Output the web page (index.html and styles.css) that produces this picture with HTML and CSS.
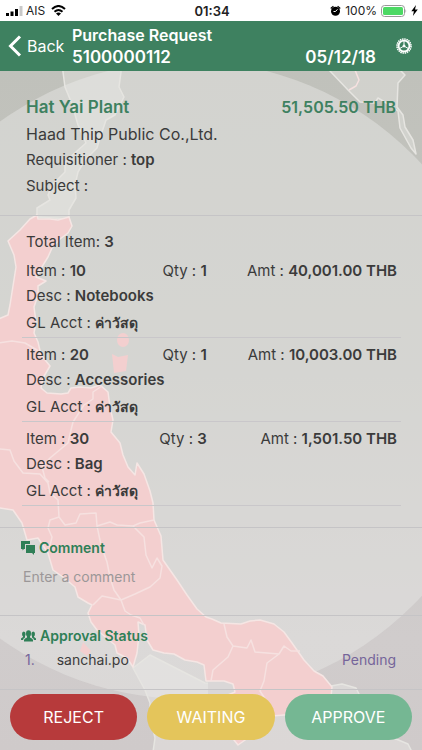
FILE: index.html
```html
<!DOCTYPE html>
<html lang="en">
<head>
<meta charset="utf-8">
<meta name="viewport" content="width=device-width, initial-scale=1">
<title>Purchase Request</title>
<link rel="stylesheet" href="styles.css">
</head>
<body>
<svg class="map" viewBox="0 0 422 750" preserveAspectRatio="xMidYMin slice" aria-hidden="true">
  <circle class="globe" cx="187" cy="380" r="319"/>
  <path class="land" d="M62 60L63 72L65 87L72 104L78 125L86 143L77 151L65 162L65 172L52 185L48 195L50 200L37 208L37 217L69 219L69 210L76 198L75 185L78 172L85 160L97 148L100 138L106 120L115 115L124 97L119 87L121 72L120 60Z"/>
  <path class="land" d="M320 60L330 71L348 90L360 102L375 103L378 98L388 104L398 111L400 128L411 148L416 154L413 140L405 127L403 115L397 107L398 83L405 75L400 70L398 60Z"/>
  <path class="border" d="M355 70L359 80L356 86L349 90"/>
  <path class="land" d="M133 668L145 690L150 703L150 715L155 738L153 752L412 752L408 744L396 739L378 733L362 700L356 688L342 684L331 686L205 683L150 655Z"/>
  <path class="sea" d="M208 682L228 681L235 686L236 694L208 694Z"/>
  <path class="province" d="M37 215L38 219L50 219L58 220L69 217L72 226L68 233L60 239L52 248L48 257L40 270L36 277L46 281L38 286L38 295L34 307L36 322L34 333L38 342L41 355L50 366L43 378L41 388L47 393L61 394L68 393L71 388L80 387L91 388L100 385L108 392L110 407L113 420L111 432L120 443L123 455L128 467L135 475L137 463L144 474L150 491L153 503L154 520L161 536L163 560L177 580L187 595L197 609L206 617L212 619L221 623L241 624L250 621L260 620L274 624L284 632L292 643L304 660L314 671L323 676L332 687L331 697L325 712L284 715L272 716L262 724L248 738L238 745L230 735L220 715L216 700L235 692L233 684L224 681L206 681L204 665L197 662L185 660L174 654L164 653L153 650L147 640L145 625L138 622L139 635L137 653L133 667L127 658L117 653L115 645L97 630L91 622L88 613L92 605L88 603L78 597L75 587L63 577L53 570L48 553L38 538L27 540L22 523L13 510L0 508L-4 508L-4 320L8 315L10 305L16 267L14 255L8 241L20 230L30 219Z"/>
  <path class="border" d="M-2 343L12 341L25 343L37 350L41 355M102 386L93 392L93 399L84 405L73 422L71 430L68 443L50 458L42 467L45 478L49 482M0 449L10 450L14 461L23 473L40 474L48 483L50 493L58 500L59 517L50 520L48 528L52 537L49 550M59 517L65 525L76 523L80 514L96 513L97 526L110 522L117 525L133 526L140 523L154 520M97 526L101 545L107 562L110 577L114 590L121 600M133 526L144 537L146 555L152 568L157 558L162 566L160 578L150 587L135 594L121 600L125 611L131 615L140 618L144 625M93 605L102 596L121 600L135 594M224 624L227 637L233 646L228 657L213 670L211 681M233 646L247 648L251 640L255 652L279 654L284 646L291 651L300 651M279 654L267 663L264 681L260 691L271 708L272 716"/>
  <ellipse class="isle" cx="123" cy="340" rx="6" ry="7"/>
  <path class="isle" d="M112 354L118 357L128 355L126 371L114 373Z"/>
  <path class="isle" d="M83 642L91 651L87 656L80 651Z"/>
</svg>
<div class="app">
  <div class="status">
    <div class="status-side">
      <svg width="17" height="10" viewBox="0 0 17 10" aria-hidden="true"><path d="M0 7h3v3H0zM4.500 5.500h3V10h-3zM9 3h3v7H9z"/><path fill="#c8c8c8" d="M13.500 0h3v10h-3z"/></svg>
      <span>AIS</span>
      <svg class="wifi" width="15" height="11" viewBox="0 0 15 11" fill="none" stroke="#000" stroke-width="2" aria-hidden="true"><path d="M1 4q6.500-6 13 0M3.500 6.800q4-3.600 8 0"/><path fill="#000" stroke="none" d="M7.500 11L5 8.500q2.500-2 5 0z"/></svg>
    </div>
    <b class="clock">01:34</b>
    <div class="status-side end">
      <svg width="11" height="12" viewBox="0 0 11 12" aria-hidden="true"><circle cx="5.500" cy="6.300" r="4.500"/><path d="M.3 3L3 .8l.8.8L1.200 4zM10.700 3L8 .8l-.8.8L9.800 4z"/><path d="M7.500 4.300l-2 2.200H3.500" fill="none" stroke="#fff"/></svg>
      <span>100%</span>
      <svg width="26" height="12" viewBox="0 0 26 12" aria-hidden="true"><rect x=".5" y=".5" width="23" height="11" rx="3" fill="#fff" stroke="#999"/><rect x="2" y="2" width="20" height="8" rx="1.500" fill="#4cd964"/><path fill="#999" d="M24.500 4q1.500 2 0 4z"/></svg>
      <svg width="7" height="11" viewBox="0 0 7 11" aria-hidden="true"><path d="M5 0L.3 6.200h2.600L1.900 11 6.800 4.500H4z"/></svg>
    </div>
  </div>
  <header class="bar">
    <button class="back" type="button"><svg width="14" height="22" viewBox="0 0 14 22" aria-hidden="true"><path d="M12 1.500L2.500 11l9.500 9.500" fill="none" stroke="#fff" stroke-width="3"/></svg>Back</button>
    <div class="titles">
      <h1>Purchase Request</h1>
      <div class="sub"><span>5100000112</span><span>05/12/18</span></div>
    </div>
    <button class="gear" type="button" aria-label="Settings"><svg width="16" height="16" viewBox="0 0 16 16" fill="none" stroke="#fff" aria-hidden="true"><circle cx="8" cy="8" r="7" stroke-width="1.600" stroke-dasharray="1.500 .7"/><circle cx="8" cy="8" r="5.400" stroke-width="1.800"/><path d="M8 8V3M8 8l4.300 2.500M8 8l-4.300 2.500"/><circle cx="8" cy="8" r="1" fill="#fff"/></svg></button>
  </header>
  <main>
    <section class="summary">
      <div class="plant"><h2>Hat Yai Plant</h2><strong>51,505.50 THB</strong></div>
      <p class="company">Haad Thip Public Co.,Ltd.</p>
      <p>Requisitioner : <b>top</b></p>
      <p>Subject :</p>
    </section>
    <section class="items">
      <p class="total">Total Item: <b>3</b></p>
      <article class="item">
        <div class="cols"><span>Item : <b>10</b></span><span>Qty : <b>1</b></span><span>Amt : <b>40,001.00 THB</b></span></div>
        <p>Desc : <b>Notebooks</b></p>
        <p class="gl">GL Acct : <b lang="th">ค่าวัสดุ</b></p>
      </article>
      <article class="item">
        <div class="cols"><span>Item : <b>20</b></span><span>Qty : <b>1</b></span><span>Amt : <b>10,003.00 THB</b></span></div>
        <p>Desc : <b>Accessories</b></p>
        <p class="gl">GL Acct : <b lang="th">ค่าวัสดุ</b></p>
      </article>
      <article class="item">
        <div class="cols"><span>Item : <b>30</b></span><span>Qty : <b>3</b></span><span>Amt : <b>1,501.50 THB</b></span></div>
        <p>Desc : <b>Bag</b></p>
        <p class="gl">GL Acct : <b lang="th">ค่าวัสดุ</b></p>
      </article>
    </section>
    <section class="comment">
      <label class="heading" for="comment"><svg width="14" height="14" viewBox="0 0 14 14" aria-hidden="true"><path d="M0 0h9v3H4v5H3L1.500 9.500V8H0z"/><path d="M5 4h9v8h-1v2l-2-2H5z"/></svg>Comment</label>
      <input id="comment" type="text" placeholder="Enter a comment">
    </section>
    <section class="approval">
      <h2 class="heading"><svg width="15" height="12" viewBox="0 0 15 12" aria-hidden="true"><ellipse cx="7.500" cy="3.500" rx="2.500" ry="3.300"/><path d="M3 11.500V10q0-1.500 3-2.500V6h3v1.500q3 1 3 2.500v1.500z"/><ellipse cx="2.800" cy="4" rx="1.800" ry="2.500"/><ellipse cx="12.200" cy="4" rx="1.800" ry="2.500"/><path d="M0 10V8.500L2 7V6h2v1.500L2.200 9v1zM15 10V8.500L13 7V6h-2v1.500L12.800 9v1z"/></svg>Approval Status</h2>
      <div class="step"><span>1.</span><span class="who">sanchai.po</span><span>Pending</span></div>
    </section>
  </main>
  <footer class="actions">
    <button class="reject" type="button">REJECT</button>
    <button class="waiting" type="button">WAITING</button>
    <button class="approve" type="button">APPROVE</button>
  </footer>
</div>
</body>
</html>
```
FILE: styles.css
```css
* { box-sizing: border-box; }

body {
  margin: 0;
  min-height: 100vh;
  background: linear-gradient(#c0c1bb 70px, #c5c5c0 50%, #d0cccc 85%, #cfcaca);
  color: #3b3b3b;
  font: 15px/26px Inter, "Noto Sans", sans-serif;
}

h1, h2, p { margin: 0; }
b, strong, h1, h2 { font-weight: 600; }
button, input { font: inherit; border: 0; padding: 0; background: none; }

.map {
  position: absolute;
  top: 0;
  left: 0;
  width: 100%;
  height: 100%;
}
.globe { fill: #e6e6e3; fill-opacity: 0.5; }
.land { fill: #f1f0ed; fill-opacity: 0.35; stroke: #e6e5e1; stroke-width: 1.5; stroke-linejoin: round; }
.province { fill: #f3cfcf; stroke: #f5e6e4; stroke-width: 1.5; stroke-linejoin: round; }
.border { fill: none; stroke: #f6e1e0; stroke-width: 1.5; stroke-linejoin: round; }
.isle { fill: #f3cfcf; }
.sea { fill: #dad7d7; }

.app { position: relative; min-height: 100vh; display: flex; flex-direction: column; }
main { flex: 1; }

.status {
  display: flex;
  align-items: center;
  height: 21px;
  padding: 0 4px 0 6px;
  background: #fff;
  color: #222;
  font-size: 12px;
}
.status-side { flex: 1; display: flex; align-items: center; gap: 3px; }
.end { justify-content: flex-end; gap: 4px; }
.wifi { margin-left: 3px; }
.clock { font-size: 13px; }

.bar {
  display: flex;
  align-items: center;
  height: 50px;
  padding: 0 10px 0 8px;
  background: #3e8160;
  color: #fff;
  line-height: 22px;
}
.back { display: flex; align-items: center; gap: 5px; width: 64px; color: #fff; font-size: 16px; }
.titles { flex: 1; font-weight: 600; }
.titles h1 { font-size: 16px; }
.sub { display: flex; justify-content: space-between; font-size: 17px; }
.gear { display: flex; margin-left: 20px; }

section { border-bottom: 1px solid #c5c4c6; }

.summary { padding: 23px 26px 16px; }
.plant { display: flex; justify-content: space-between; color: #3e8160; font-size: 16px; line-height: 27px; }
.plant h2 { font-size: 17px; }
.company { font-size: 16px; }

.items { padding: 13px 21px 21px 22px; }
.total { padding-left: 4px; line-height: 25px; }
.item { padding: 4px 4px 0; line-height: 25px; border-bottom: 1px solid #c9c7ca; }
.cols { display: grid; grid-template-columns: 19fr 19fr 40fr; text-align: right; white-space: nowrap; }
.cols :first-child { text-align: left; }
.gl { height: 29px; line-height: 29px; }
.gl b { font-size: 14px; }

.heading { display: flex; align-items: center; gap: 4px; color: #2f7f57; fill: #2f7f57; font-size: 14px; font-weight: 600; line-height: 24px; }

.comment { padding: 8px 22px 26px 21px; }
.comment input { display: block; width: 100%; height: 24px; margin-top: 5px; padding-left: 2px; color: #3b3b3b; font-size: 14px; }
.comment input::placeholder { color: #9b9798; opacity: 1; }

.approval { padding: 8px 26px 17px 21px; }
.step { display: flex; gap: 22px; padding-left: 4px; color: #75659a; font-size: 14px; line-height: 24px; }
.who { flex: 1; color: #3b3b3b; }

.actions { display: flex; gap: 10px; padding: 4px 10px 10px; }
.actions button { flex: 1; height: 46px; border-radius: 23px; color: #fff; font-size: 16px; }
.reject { background: #b73a3b; }
.waiting { background: #e4c55b; }
.approve { background: #75b793; }
```
